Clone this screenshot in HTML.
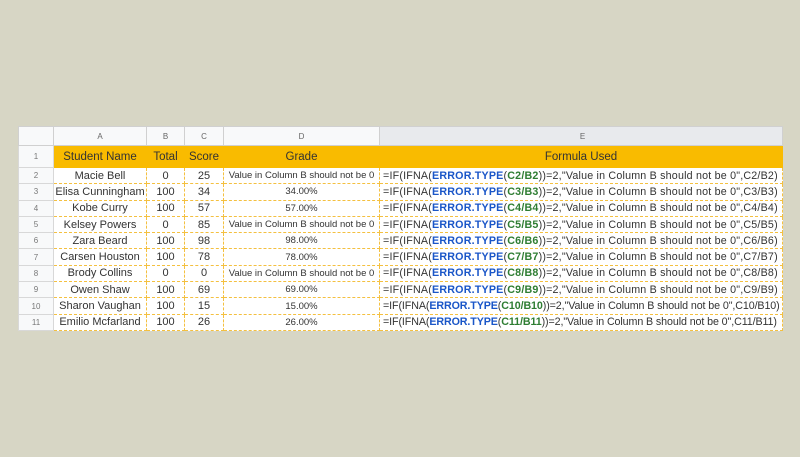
<!DOCTYPE html>
<html><head><style>
body{margin:0;width:800px;height:457px;background:#d7d6c5;font-family:"Liberation Sans",sans-serif;position:relative;overflow:hidden}
table{position:absolute;left:18px;top:126px;width:764px;border-collapse:collapse;table-layout:fixed;background:#fff}
td{padding:0;text-align:center;white-space:nowrap;overflow:hidden;font-size:11px;color:#333;height:15.3px;border:1px dashed #f4c040}
tr.h td{height:18px;background:#f8f9fa;border:1px solid #d0d0d0;color:#666;font-size:8px}
tr.h td.e{background:#e8eaed;letter-spacing:0}
td.n{background:#f8f9fa;border:1px solid #d8d8d8;color:#777;font-size:8px}
tr.y td{background:#f9bb00;height:21px;font-size:11.5px;color:#333;border:1px solid #f9bb00}
tr.y td.n{background:#f8f9fa;border:1px solid #d8d8d8;font-size:8px;color:#777}
td.d{font-size:9.5px}
td.e{text-align:left;padding-left:3px;font-size:10.7px;letter-spacing:0.2px}
td.e.t{letter-spacing:-0.1px}
b.b{color:#1a56c8}b.g{color:#2e7d32}
</style></head><body>
<table>
<colgroup><col style="width:35px"><col style="width:93px"><col style="width:38px"><col style="width:39px"><col style="width:156px"><col style="width:403px"></colgroup>
<tr class="h"><td></td><td>A</td><td>B</td><td>C</td><td>D</td><td class="e" style="text-align:center">E</td></tr>
<tr class="y"><td class="n">1</td><td>Student Name</td><td>Total</td><td>Score</td><td>Grade</td><td style="text-align:center">Formula Used</td></tr>
<tr><td class="n">2</td><td>Macie Bell</td><td>0</td><td>25</td><td class="d">Value in Column B should not be 0</td><td class="e">=IF(IFNA(<b class="b">ERROR.TYPE</b>(<b class="g">C2/B2</b>))=2,"Value in Column B should not be 0",C2/B2)</td></tr>
<tr><td class="n">3</td><td>Elisa Cunningham</td><td>100</td><td>34</td><td class="d">34.00%</td><td class="e">=IF(IFNA(<b class="b">ERROR.TYPE</b>(<b class="g">C3/B3</b>))=2,"Value in Column B should not be 0",C3/B3)</td></tr>
<tr><td class="n">4</td><td>Kobe Curry</td><td>100</td><td>57</td><td class="d">57.00%</td><td class="e">=IF(IFNA(<b class="b">ERROR.TYPE</b>(<b class="g">C4/B4</b>))=2,"Value in Column B should not be 0",C4/B4)</td></tr>
<tr><td class="n">5</td><td>Kelsey Powers</td><td>0</td><td>85</td><td class="d">Value in Column B should not be 0</td><td class="e">=IF(IFNA(<b class="b">ERROR.TYPE</b>(<b class="g">C5/B5</b>))=2,"Value in Column B should not be 0",C5/B5)</td></tr>
<tr><td class="n">6</td><td>Zara Beard</td><td>100</td><td>98</td><td class="d">98.00%</td><td class="e">=IF(IFNA(<b class="b">ERROR.TYPE</b>(<b class="g">C6/B6</b>))=2,"Value in Column B should not be 0",C6/B6)</td></tr>
<tr><td class="n">7</td><td>Carsen Houston</td><td>100</td><td>78</td><td class="d">78.00%</td><td class="e">=IF(IFNA(<b class="b">ERROR.TYPE</b>(<b class="g">C7/B7</b>))=2,"Value in Column B should not be 0",C7/B7)</td></tr>
<tr><td class="n">8</td><td>Brody Collins</td><td>0</td><td>0</td><td class="d">Value in Column B should not be 0</td><td class="e">=IF(IFNA(<b class="b">ERROR.TYPE</b>(<b class="g">C8/B8</b>))=2,"Value in Column B should not be 0",C8/B8)</td></tr>
<tr><td class="n">9</td><td>Owen Shaw</td><td>100</td><td>69</td><td class="d">69.00%</td><td class="e">=IF(IFNA(<b class="b">ERROR.TYPE</b>(<b class="g">C9/B9</b>))=2,"Value in Column B should not be 0",C9/B9)</td></tr>
<tr><td class="n">10</td><td>Sharon Vaughan</td><td>100</td><td>15</td><td class="d">15.00%</td><td class="e t">=IF(IFNA(<b class="b">ERROR.TYPE</b>(<b class="g">C10/B10</b>))=2,"Value in Column B should not be 0",C10/B10)</td></tr>
<tr><td class="n">11</td><td>Emilio Mcfarland</td><td>100</td><td>26</td><td class="d">26.00%</td><td class="e t">=IF(IFNA(<b class="b">ERROR.TYPE</b>(<b class="g">C11/B11</b>))=2,"Value in Column B should not be 0",C11/B11)</td></tr>
</table>
</body></html>
